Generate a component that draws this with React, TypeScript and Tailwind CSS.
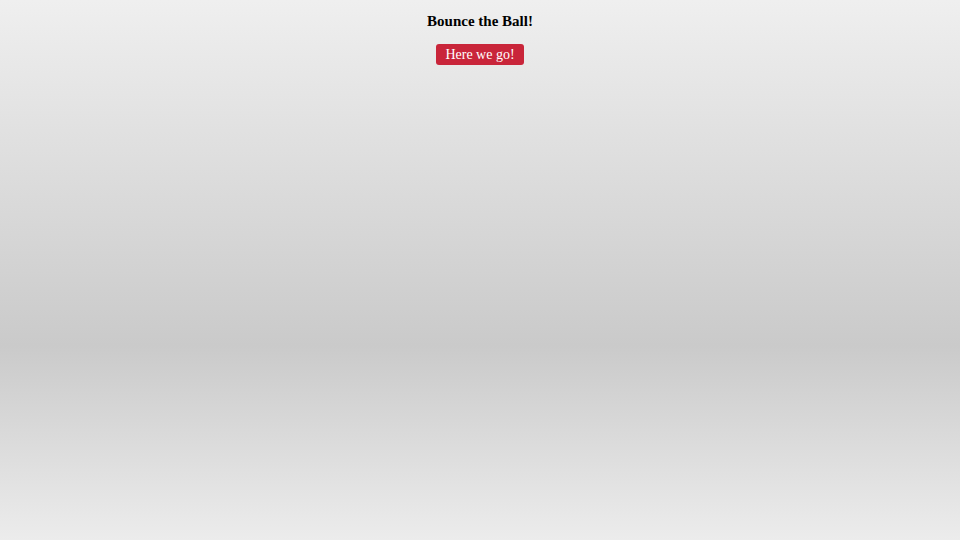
export default function App() {
    return (
        <div className="min-h-screen w-full flex flex-col items-center bg-[linear-gradient(to_bottom,#efefef_0%,#cacaca_64%,#ececec_100%)] font-['Liberation_Serif',serif]">
            {/* Title */}
            <h1 className="mt-[9px] text-[15px] leading-6 font-bold text-black">Bounce the Ball!</h1>

            {/* Start button */}
            <button className="mt-[11px] h-[21px] w-[88px] rounded-[3px] bg-[#c9253a] text-[14px] leading-[21px] text-white">
                Here we go!
            </button>
        </div>
    )
}
